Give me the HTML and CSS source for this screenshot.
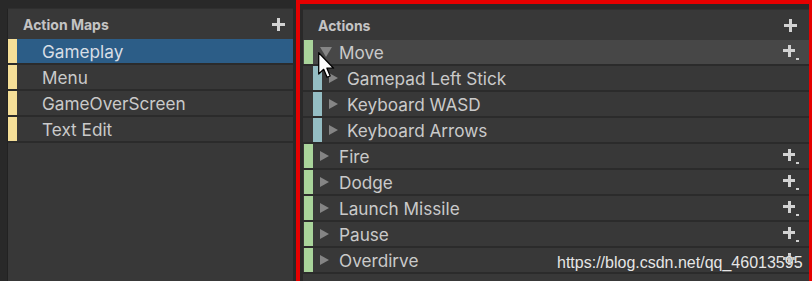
FILE: index.html
```html
<!DOCTYPE html>
<html>
<head>
<meta charset="utf-8">
<link rel="stylesheet" href="styles.css">
</head>
<body>
<div class="app">
  <section class="panel maps">
    <div class="head"><span>Action Maps</span><span class="plus big"></span></div>
    <div class="row sel"><i class="bar yellow"></i><span class="label">Gameplay</span></div>
    <div class="row"><i class="bar yellow"></i><span class="label">Menu</span></div>
    <div class="row"><i class="bar yellow"></i><span class="label">GameOverScreen</span></div>
    <div class="row"><i class="bar yellow"></i><span class="label">Text Edit</span></div>
  </section>
  <div class="highlight">
    <section class="panel actions">
      <div class="head"><span>Actions</span><span class="plus big"></span></div>
      <div class="row act hover"><i class="bar green"></i><i class="tri down"></i><span class="label">Move</span><span class="plus drop"></span></div>
      <div class="row child"><i class="bar teal"></i><i class="tri"></i><span class="label">Gamepad Left Stick</span></div>
      <div class="row child"><i class="bar teal"></i><i class="tri"></i><span class="label">Keyboard WASD</span></div>
      <div class="row child"><i class="bar teal"></i><i class="tri"></i><span class="label">Keyboard Arrows</span></div>
      <div class="row act"><i class="bar green"></i><i class="tri"></i><span class="label">Fire</span><span class="plus drop"></span></div>
      <div class="row act"><i class="bar green"></i><i class="tri"></i><span class="label">Dodge</span><span class="plus drop"></span></div>
      <div class="row act"><i class="bar green"></i><i class="tri"></i><span class="label">Launch Missile</span><span class="plus drop"></span></div>
      <div class="row act"><i class="bar green"></i><i class="tri"></i><span class="label">Pause</span><span class="plus drop"></span></div>
      <div class="row act"><i class="bar green"></i><i class="tri"></i><span class="label">Overdirve</span><span class="plus drop"></span></div>
    </section>
  </div>
</div>
<svg class="cursor" width="17" height="27" viewBox="0 0 12 19">
  <path d="M0.5 0.5 L0.5 15.5 L4 12.2 L6.4 17.8 L8.6 16.9 L6.3 11.4 L11 11.4 Z" fill="#fff" stroke="#000" stroke-width="0.9" stroke-linejoin="round"/>
</svg>
<div class="watermark">https://blog.csdn.net/qq_46013595</div>
</body>
</html>
```
FILE: styles.css
```css
html, body {
  margin: 0;
  padding: 0;
}
body {
  width: 812px;
  height: 281px;
  overflow: hidden;
  background: #292929;
  font-family: Inter, "Noto Sans", sans-serif;
  position: relative;
}
.app {
  display: flex;
  height: 281px;
}
.panel {
  background: #383838;
  display: flex;
  flex-direction: column;
}
.maps {
  width: 285px;
  margin: 8px 0 0 7px;
  border-left: 1px solid #222;
  border-top: 1px solid #2f2f2f;
}
.highlight {
  margin-left: 3px;
  flex: 1;
  border: 4px solid #e60000;
  border-right-width: 3px;
  border-bottom: 0;
  padding: 5px 0 0 3px;
  display: flex;
}
.actions {
  flex: 1;
  border-top: 1px solid #2f2f2f;
}
.head {
  height: 30px;
  display: flex;
  align-items: center;
  justify-content: space-between;
  font-weight: 700;
  font-size: 14px;
  color: #c4c4c4;
}
.maps .head { padding: 0 8px 0 15px; }
.actions .head { padding: 0 12px 0 15px; }
.row {
  height: 24px;
  border-bottom: 2px solid #2b2b2b;
  display: flex;
  align-items: center;
  color: #cacaca;
  font-size: 17.2px;
  position: relative;
}
.row.sel { background: #2c5d87; color: #d8dee5; }
.row.hover { background: #474747; }
.bar {
  width: 9px;
  align-self: stretch;
  flex: none;
}
.yellow { background: #f5df98; }
.green { background: #a9d49b; margin-left: 1px; }
.teal { background: #94bdc3; margin-left: 10px; }
.maps .label { margin-left: 25px; }
.tri {
  width: 0;
  height: 0;
  border-top: 5.5px solid transparent;
  border-bottom: 5.5px solid transparent;
  border-left: 9px solid #858585;
  flex: none;
}
.act .tri { margin-left: 7px; }
.child .tri { margin-left: 7px; }
.tri.down {
  border-left: 6px solid transparent;
  border-right: 6px solid transparent;
  border-top: 10px solid #858585;
  border-bottom: 0;
}
.act .label { margin-left: 10px; }
.act .tri.down + .label { margin-left: 7px; }
.child .label { margin-left: 9px; }
.plus {
  position: relative;
  width: 13px;
  height: 13px;
  flex: none;
}
.plus::before, .plus::after {
  content: "";
  position: absolute;
  background: #d2d2d2;
}
.plus::before { left: 5px; top: 0; width: 3px; height: 13px; }
.plus::after { left: 0; top: 5px; width: 13px; height: 3px; }
.plus.drop {
  margin-left: auto;
  margin-right: 10px;
  width: 16px;
  height: 15px;
  background: linear-gradient(#cfcfcf, #cfcfcf) no-repeat 13px 13px / 3px 2px;
}
.plus.drop::before { left: 5px; top: 0; width: 2.5px; height: 12px; }
.plus.drop::after { left: 0; top: 4.8px; width: 12px; height: 2.5px; }
.cursor {
  position: absolute;
  left: 318px;
  top: 52px;
}
.watermark {
  position: absolute;
  left: 557px;
  top: 254px;
  font-family: "Liberation Sans", Arial, sans-serif;
  font-size: 16px;
  color: #e6e6e6;
  text-shadow: 0 0 1px #333;
}
```
